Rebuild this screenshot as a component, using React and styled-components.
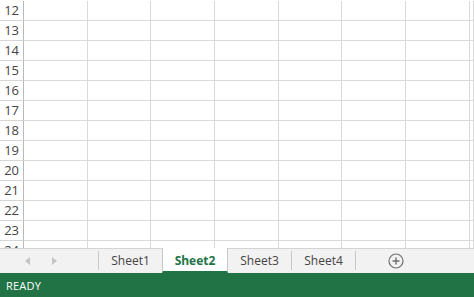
import React from "react";
import styled, { createGlobalStyle } from "styled-components";

const GlobalStyle = createGlobalStyle`
  html, body {
    margin: 0;
    padding: 0;
    background: #ffffff;
  }
  body {
    font-family: "Open Sans", "Noto Sans", Arial, sans-serif;
  }
`;

const colWidths = [64, 63, 64, 64, 63, 64, 64];
const rows = [12, 13, 14, 15, 16, 17, 18, 19, 20, 21, 22, 23, 24];
const sheets = ["Sheet1", "Sheet2", "Sheet3", "Sheet4"];

const App = () => {
  return (
    <Window>
      <GlobalStyle />
      <Grid>
        {rows.map((n) => (
          <Row key={n}>
            <RowHead>{n}</RowHead>
            {colWidths.map((w, i) => (
              <Cell key={i} $w={w} />
            ))}
            <Cell $grow />
          </Row>
        ))}
      </Grid>
      <TabBar>
        <Nav>
          <Arrow $left />
          <Arrow />
        </Nav>
        {sheets.map((s) => (
          <Tab key={s} $active={s === "Sheet2"}>
            {s}
          </Tab>
        ))}
        <AddButton>
          <svg width="16" height="16" viewBox="0 0 16 16">
            <circle cx="8" cy="8" r="7" fill="none" stroke="#6f6f6f" strokeWidth="1.2" />
            <path d="M8 4.5v7M4.5 8h7" stroke="#6f6f6f" strokeWidth="1.4" />
          </svg>
        </AddButton>
      </TabBar>
      <StatusBar>READY</StatusBar>
    </Window>
  );
};

const Window = styled.div`
  width: 474px;
  height: 297px;
  display: flex;
  flex-direction: column;
  overflow: hidden;
`;

const Grid = styled.div`
  height: 247px;
  padding-top: 1px;
  overflow: hidden;
  display: flex;
  flex-direction: column;
`;

const Row = styled.div`
  display: flex;
  height: 20px;
  flex-shrink: 0;
`;

const RowHead = styled.div`
  width: 24px;
  box-sizing: border-box;
  border-right: 1px solid #b9b9b9;
  border-bottom: 1px solid #d6d6d6;
  color: #444444;
  font-size: 13px;
  text-align: right;
  padding-right: 4px;
  line-height: 19px;
  background: #ffffff;
`;

const Cell = styled.div`
  box-sizing: border-box;
  width: ${(p) => (p.$grow ? "auto" : `${p.$w}px`)};
  flex: ${(p) => (p.$grow ? "1" : "none")};
  border-right: 1px solid #dadada;
  border-bottom: 1px solid #dadada;
`;

const TabBar = styled.div`
  height: 25px;
  box-sizing: border-box;
  background: #f2f2f2;
  border-top: 1px solid #d4d4d4;
  display: flex;
  align-items: stretch;
`;

const Nav = styled.div`
  width: 99px;
  box-sizing: border-box;
  border-right: 1px solid #c8c8c8;
  display: flex;
  align-items: center;
  padding-left: 25px;
  gap: 22px;
  margin: 2px 0 3px;
`;

const Arrow = styled.span`
  width: 0;
  height: 0;
  border-top: 4px solid transparent;
  border-bottom: 4px solid transparent;
  ${(p) =>
    p.$left
      ? "border-right: 5px solid #c4c4c4;"
      : "border-left: 5px solid #c4c4c4;"}
`;

const Tab = styled.div`
  width: 64px;
  box-sizing: border-box;
  display: flex;
  align-items: center;
  justify-content: center;
  font-size: 12px;
  color: ${(p) => (p.$active ? "#217346" : "#444444")};
  font-weight: ${(p) => (p.$active ? 700 : 400)};
  background: ${(p) => (p.$active ? "#ffffff" : "transparent")};
  border-right: 1px solid ${(p) => (p.$active ? "#c8c8c8" : "#c8c8c8")};
  ${(p) =>
    p.$active
      ? `
    margin-top: -1px;
    margin-left: -1px;
    width: 66px;
    border-left: 1px solid #c8c8c8;
    border-bottom: 2px solid #217346;
    padding-top: 1px;
  `
      : `
    margin: 2px 0 3px;
  `}
`;

const AddButton = styled.div`
  margin-left: 32px;
  display: flex;
  align-items: center;
  svg {
    display: block;
  }
`;

const StatusBar = styled.div`
  height: 24px;
  background: #217346;
  color: #ffffff;
  font-size: 11px;
  padding-left: 6px;
  display: flex;
  align-items: center;
  letter-spacing: 0.2px;
`;

export default App;
